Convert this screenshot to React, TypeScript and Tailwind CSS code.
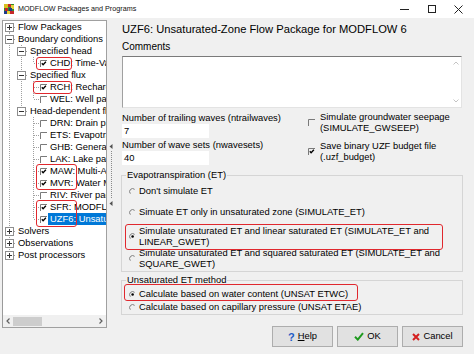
import React from "react";

type J = "line" | "none" | "full" | "top" | "bottom";

function Cell({ type, button }: { type: J; button?: "plus" | "minus" }) {
  const st = { stroke: "#a0a0a0", strokeDasharray: "1 1", fill: "none" } as const;
  return (
    <svg width="12" height="12" className="shrink-0 block">
      {(type === "line" || type === "full") && <path d="M6.5 0V12" {...st} />}
      {type === "top" && <path d="M6.5 0V6" {...st} />}
      {type === "bottom" && <path d="M6.5 7V12" {...st} />}
      {type !== "line" && type !== "none" && <path d="M7 6.5H12" {...st} />}
      {button && (
        <>
          <rect x="2.5" y="2.5" width="8" height="8" fill="#fff" stroke="#8e8e8e" />
          <path d="M4 6.5H9" stroke="#333" />
          {button === "plus" && <path d="M6.5 4V9" stroke="#333" />}
        </>
      )}
    </svg>
  );
}

function Check({ checked }: { checked: boolean }) {
  return (
    <svg width="7" height="7" viewBox="0 0 7 7" className="shrink-0 block">
      <path d="M0.5 7V0.5H7" fill="none" stroke="#7a7a7a" strokeWidth="1" />
      {checked && (
        <path d="M1.8 3.3L3.1 4.8L5.9 1.7" fill="none" stroke="#000" strokeWidth="1.3" />
      )}
    </svg>
  );
}

function Radio({ on }: { on: boolean }) {
  return (
    <svg width="7" height="7" viewBox="0 0 7 7" className="shrink-0 block">
      <path d="M1.38 5.62A3 3 0 0 1 5.62 1.38" fill="none" stroke="#7a7a7a" strokeWidth="1" />
      {on && <circle cx="3.6" cy="3.6" r="1.25" fill="#000" />}
    </svg>
  );
}

type Row = {
  level: number;
  label: string;
  kind: "plus" | "minus" | "leaf";
  checked?: boolean;
  cols: J[];
  j: J;
  sel?: boolean;
};

const rows: Row[] = [
  { level: 0, label: "Flow Packages", kind: "plus", cols: [], j: "bottom" },
  { level: 0, label: "Boundary conditions", kind: "minus", cols: [], j: "full" },
  { level: 1, label: "Specified head", kind: "minus", cols: ["line"], j: "full" },
  { level: 2, label: "CHD: Time-Variant Specified Head", kind: "leaf", checked: true, cols: ["line", "line"], j: "top" },
  { level: 1, label: "Specified flux", kind: "minus", cols: ["line"], j: "full" },
  { level: 2, label: "RCH: Recharge package", kind: "leaf", checked: true, cols: ["line", "line"], j: "full" },
  { level: 2, label: "WEL: Well package", kind: "leaf", checked: false, cols: ["line", "line"], j: "top" },
  { level: 1, label: "Head-dependent flux", kind: "minus", cols: ["line"], j: "top" },
  { level: 2, label: "DRN: Drain package", kind: "leaf", checked: false, cols: ["line", "none"], j: "full" },
  { level: 2, label: "ETS: Evapotranspiration", kind: "leaf", checked: false, cols: ["line", "none"], j: "full" },
  { level: 2, label: "GHB: General-Head Boundary", kind: "leaf", checked: false, cols: ["line", "none"], j: "full" },
  { level: 2, label: "LAK: Lake package", kind: "leaf", checked: false, cols: ["line", "none"], j: "full" },
  { level: 2, label: "MAW: Multi-Aquifer Well", kind: "leaf", checked: true, cols: ["line", "none"], j: "full" },
  { level: 2, label: "MVR: Water Mover", kind: "leaf", checked: true, cols: ["line", "none"], j: "full" },
  { level: 2, label: "RIV: River package", kind: "leaf", checked: false, cols: ["line", "none"], j: "full" },
  { level: 2, label: "SFR: MODFLOW 6 Streamflow Routing", kind: "leaf", checked: true, cols: ["line", "none"], j: "full" },
  { level: 2, label: "UZF6: Unsaturated-Zone Flow", kind: "leaf", checked: true, cols: ["line", "none"], j: "top", sel: true },
  { level: 0, label: "Solvers", kind: "plus", cols: [], j: "full" },
  { level: 0, label: "Observations", kind: "plus", cols: [], j: "full" },
  { level: 0, label: "Post processors", kind: "plus", cols: [], j: "top" },
];

function TreeRow({ r }: { r: Row }) {
  return (
    <div className="flex items-center h-[12px] leading-[12px] whitespace-nowrap">
      {r.cols.map((c, i) => (
        <Cell key={i} type={c} />
      ))}
      <Cell type={r.j} button={r.kind === "leaf" ? undefined : r.kind} />
      {r.kind === "leaf" && (
        <span className="ml-[1px]">
          <Check checked={!!r.checked} />
        </span>
      )}
      <span className={`ml-[1px] px-[2px] ${r.kind === "leaf" ? "" : "-ml-[1px]"} ${r.sel ? "bg-[#0078d7] text-white" : ""}`}>
        {r.label}
      </span>
    </div>
  );
}

function AppIcon() {
  return (
    <svg width="10" height="10" viewBox="0 0 10 10" className="block">
      <rect x="0" y="0" width="10" height="10" fill="#2f8f2f" />
      <rect x="0" y="0" width="4" height="4" fill="#d8c021" />
      <rect x="4" y="0" width="3" height="3" fill="#c62828" />
      <rect x="7" y="1" width="3" height="4" fill="#e8d23a" />
      <rect x="1" y="4" width="3" height="3" fill="#c62828" />
      <rect x="5" y="4" width="3" height="3" fill="#1e3a8a" />
      <rect x="0" y="7" width="3" height="3" fill="#1e3a8a" />
      <rect x="6" y="7" width="4" height="3" fill="#c62828" />
      <rect x="3" y="7" width="3" height="3" fill="#e8d23a" />
    </svg>
  );
}

function Btn({ children }: { children: React.ReactNode }) {
  return (
    <div className="w-[61px] h-[21px] bg-[#e1e1e1] border border-[#adadad] flex items-center justify-center gap-[3px]">
      {children}
    </div>
  );
}

function RedBox({ l, t, w, h }: { l: number; t: number; w: number; h: number }) {
  return (
    <div
      className="absolute border-[1.5px] border-[#e0282e] rounded-[3px] pointer-events-none"
      style={{ left: l, top: t, width: w, height: h }}
    />
  );
}

export default function App() {
  return (
    <div className="w-[474px] h-[354px] bg-[#f0f0f0] relative overflow-hidden font-['Liberation_Sans',Arial,sans-serif] text-[9.4px] text-black">
      {/* title bar */}
      <div className="h-[18px] bg-white flex items-center">
        <div className="ml-[4px]">
          <AppIcon />
        </div>
        <span className="ml-[4px] text-[7.2px] text-[#111]">MODFLOW Packages and Programs</span>
        <div className="ml-auto mr-[2px] flex h-full">
          <div className="w-[27px] flex items-center justify-center">
            <div className="w-[9px] h-[1px] bg-[#222]" />
          </div>
          <div className="w-[27px] flex items-center justify-center">
            <div className="w-[8px] h-[8px] border border-[#222]" />
          </div>
          <div className="w-[27px] flex items-center justify-center">
            <svg width="9" height="9" viewBox="0 0 9 9" className="block">
              <path d="M0.5 0.5L8.5 8.5M8.5 0.5L0.5 8.5" stroke="#222" strokeWidth="1" />
            </svg>
          </div>
        </div>
      </div>

      <div className="flex h-[336px]">
        {/* tree */}
        <div className="pl-[2px] pt-[2px]">
          <div className="w-[105px] h-[308px] bg-white border border-[#a0a0a0] border-l-[#9a9a9a] flex flex-col">
            <div className="flex-1 overflow-hidden">
              {rows.map((r, i) => (
                <TreeRow key={i} r={r} />
              ))}
            </div>
            <div className="h-[12px] bg-[#f0f0f0] flex items-center">
              <div className="w-[10px] flex justify-center">
                <svg width="4" height="6" viewBox="0 0 4 6" className="block">
                  <path d="M3.5 0.5L1 3L3.5 5.5" fill="none" stroke="#606060" strokeWidth="1.2" />
                </svg>
              </div>
              <div className="w-[29px] h-[9px] bg-[#cdcdcd]" />
              <div className="ml-auto w-[10px] flex justify-center">
                <svg width="4" height="6" viewBox="0 0 4 6" className="block">
                  <path d="M0.5 0.5L3 3L0.5 5.5" fill="none" stroke="#606060" strokeWidth="1.2" />
                </svg>
              </div>
            </div>
          </div>
        </div>

        {/* splitter */}
        <div className="w-[8px] flex justify-center">
          <svg width="4" height="64" viewBox="0 0 4 64" className="mt-[125px] block">
            <path d="M3.5 1L0.5 3.5L3.5 6Z" fill="#505050" />
            <path d="M2.5 8V56" stroke="#8a8a8a" strokeDasharray="1 1" />
            <path d="M3.5 58L0.5 60.5L3.5 63Z" fill="#505050" />
          </svg>
        </div>

        {/* right panel */}
        <div className="flex-1 flex flex-col pl-[8px] pr-[11px]">
          <div className="mt-[5px] h-[13px] leading-[13px] whitespace-nowrap text-[11.2px]">
            UZF6: Unsaturated-Zone Flow Package for MODFLOW 6
          </div>
          <div className="mt-[5px] h-[12px] leading-[12px] text-[10px]">Comments</div>
          <div className="mt-[3px] h-[52px] w-[340px] bg-white border-t border-l border-t-[#7a7a7a] border-l-[#a0a0a0] border-r border-b border-r-[#e3e3e3] border-b-[#e3e3e3] flex justify-end">
            <div className="w-[11px] flex flex-col justify-between items-center py-[4px]">
              <svg width="6" height="4" viewBox="0 0 6 4" className="block">
                <path d="M0.5 3.5L3 1L5.5 3.5" fill="none" stroke="#c4c4c4" strokeWidth="1" />
              </svg>
              <svg width="6" height="4" viewBox="0 0 6 4" className="block">
                <path d="M0.5 0.5L3 3L5.5 0.5" fill="none" stroke="#c4c4c4" strokeWidth="1" />
              </svg>
            </div>
          </div>

          <div className="mt-[4px] flex">
            <div className="w-[186px]">
              <div className="h-[12px] leading-[12px] whitespace-nowrap">Number of trailing waves (ntrailwaves)</div>
              <div className="h-[14px] w-[87px] bg-white leading-[14px] pl-[2px]">7</div>
              <div className="mt-[1px] h-[12px] leading-[12px] whitespace-nowrap">Number of wave sets (nwavesets)</div>
              <div className="h-[14px] w-[87px] bg-white leading-[14px] pl-[2px]">40</div>
            </div>
            <div className="flex flex-col">
              <div className="-mt-[1px] flex items-center gap-[5px]">
                <Check checked={false} />
                <div className="leading-[11px] whitespace-nowrap">
                  <div>Simulate groundwater seepage</div>
                  <div>(SIMULATE_GWSEEP)</div>
                </div>
              </div>
              <div className="mt-[7px] flex items-center gap-[5px]">
                <Check checked={true} />
                <div className="leading-[11px] whitespace-nowrap">
                  <div>Save binary UZF budget file</div>
                  <div>(.uzf_budget)</div>
                </div>
              </div>
            </div>
          </div>

          <fieldset className="mt-[4px] -ml-[1px] w-[342px] border border-[#d5d5d5] px-0 pt-0 pb-[2px]">
            <legend className="ml-[4px] px-[1px] leading-[12px]">Evapotranspiration (ET)</legend>
            <div className="pl-[7px] pt-[4px]">
              <div className="h-[12px] flex items-center gap-[3px] leading-[12px]">
                <Radio on={false} />
                <span>Don't simulate ET</span>
              </div>
              <div className="mt-[9px] h-[12px] flex items-center gap-[3px] leading-[12px]">
                <Radio on={false} />
                <span>Simuate ET only in unsaturated zone (SIMULATE_ET)</span>
              </div>
              <div className="mt-[7px] h-[22px] flex items-center gap-[3px] leading-[11px]">
                <Radio on={true} />
                <div className="whitespace-nowrap">
                  <div>Simulate unsaturated ET and linear saturated ET (SIMULATE_ET and</div>
                  <div>LINEAR_GWET)</div>
                </div>
              </div>
              <div className="h-[22px] flex items-center gap-[3px] leading-[11px]">
                <Radio on={false} />
                <div className="whitespace-nowrap">
                  <div>Simulate unsaturated ET and squared saturated ET (SIMULATE_ET and</div>
                  <div>SQUARE_GWET)</div>
                </div>
              </div>
            </div>
          </fieldset>

          <fieldset className="mt-[2px] -ml-[1px] w-[342px] border border-[#d5d5d5] px-0 pt-0 pb-[1px]">
            <legend className="ml-[4px] px-[1px] leading-[12px]">Unsaturated ET method</legend>
            <div className="pl-[7px] pt-[2px]">
              <div className="h-[12px] flex items-center gap-[3px] leading-[12px]">
                <Radio on={true} />
                <span>Calculate based on water content (UNSAT ETWC)</span>
              </div>
              <div className="mt-[1px] h-[12px] flex items-center gap-[3px] leading-[12px]">
                <Radio on={false} />
                <span>Calculate based on capillary pressure (UNSAT ETAE)</span>
              </div>
            </div>
          </fieldset>

          <div className="mt-[11px] flex justify-end gap-[4px]">
            <Btn>
              <span className="text-[#1e5bc6] font-bold text-[11px] leading-[12px]">?</span>
              <span>
                <span className="underline">H</span>elp
              </span>
            </Btn>
            <Btn>
              <svg width="10" height="9" viewBox="0 0 10 9" className="block">
                <path d="M1 4.8L3.8 7.6L9 1.2" fill="none" stroke="#1f9a1f" strokeWidth="2" />
              </svg>
              <span>OK</span>
            </Btn>
            <Btn>
              <svg width="8" height="8" viewBox="0 0 8 8" className="block">
                <path d="M1 1L7 7M7 1L1 7" stroke="#d42020" strokeWidth="2" />
              </svg>
              <span>Cancel</span>
            </Btn>
          </div>
        </div>
      </div>

      {/* red annotation boxes */}
      <RedBox l={36} t={57} w={36} h={13} />
      <RedBox l={33} t={81} w={39} h={13} />
      <RedBox l={36} t={164} w={41} h={26} />
      <RedBox l={36} t={200} w={41} h={27} />
      <RedBox l={125} t={224} w={318} h={26} />
      <RedBox l={124} t={284} w={234} h={17} />
    </div>
  );
}
